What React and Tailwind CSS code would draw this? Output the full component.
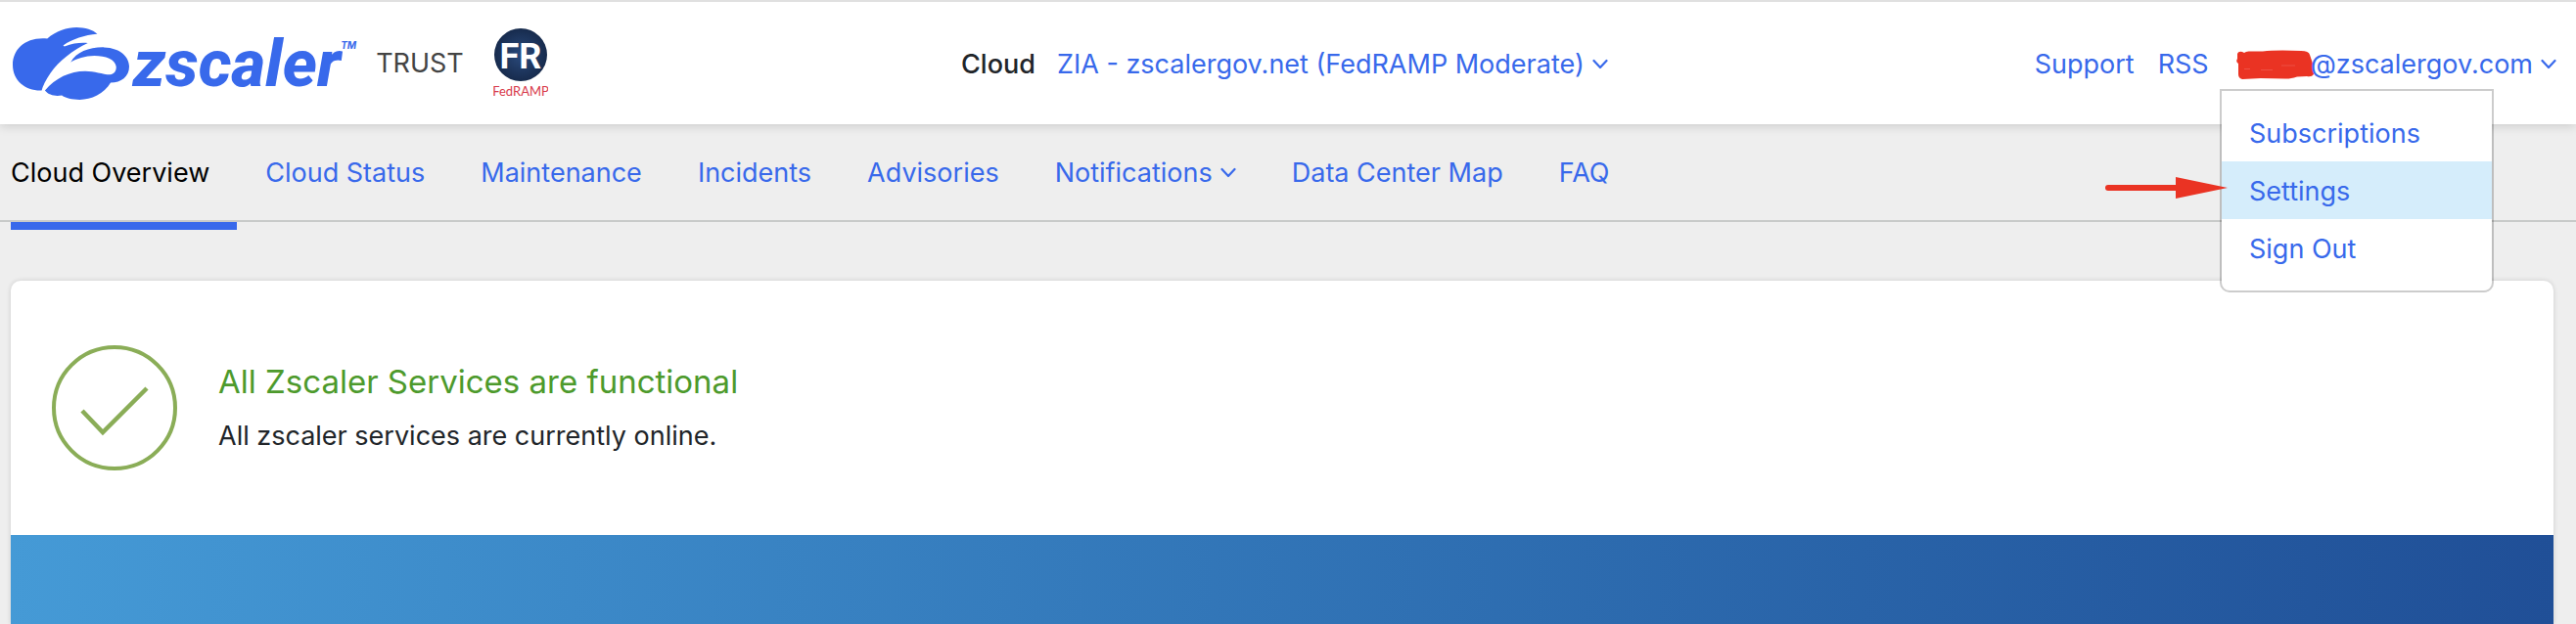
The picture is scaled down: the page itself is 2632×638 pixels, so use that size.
import React from 'react';

const NAV_ITEMS = [
  { label: 'Cloud Overview', active: true },
  { label: 'Cloud Status' },
  { label: 'Maintenance' },
  { label: 'Incidents' },
  { label: 'Advisories' },
  { label: 'Notifications', menu: true },
  { label: 'Data Center Map' },
  { label: 'FAQ' }
];

const ACCOUNT_ITEMS = [
  { label: 'Subscriptions' },
  { label: 'Settings', active: true },
  { label: 'Sign Out' }
];

const Chevron = () => (
  <svg className="w-4 h-3 shrink-0" viewBox="0 0 16 12" fill="none" aria-hidden="true">
    <path d="M1.5 2 8 9 14.5 2" stroke="currentColor" strokeWidth="2.2" strokeLinecap="round" strokeLinejoin="round" />
  </svg>
);

const CloudLogo = () => (
  <svg className="w-[119px] h-[74px] shrink-0" viewBox="39 40 358 222" fill="#3869eb" aria-hidden="true">
    <path d="M128 234C80 236 39 205 39 155C39 105 80 68 145 74C175 50 205 40 235 40C262 41 285 47 299 60C260 63 222 76 194 95L198 98C225 88 250 86 270 88C225 108 180 145 155 180C140 202 131 220 128 234Z" />
    <path d="M217 147C235 115 275 100 320 101C370 103 397 130 397 160C397 192 372 209 340 210C320 245 280 262 245 262C222 262 200 257 190 249C170 252 150 249 138 234C170 195 215 174 262 174C290 174 315 184 338 185C352 183 358 172 357 160C354 138 325 127 290 127C262 128 235 135 217 147Z" />
  </svg>
);

const FedRampBadge = () => (
  <svg className="w-14 h-[72px] shrink-0" viewBox="0 0 56 72" role="img" aria-label="FedRAMP">
    <defs>
      <radialGradient id="badge">
        <stop offset="0" stopColor="#2a4a7c" />
        <stop offset="1" stopColor="#172b4d" />
      </radialGradient>
    </defs>
    <circle cx="28" cy="27" r="27" fill="url(#badge)" />
    <text x="28" y="41" textAnchor="middle" fontFamily="Roboto, sans-serif" fontWeight="700" fontSize="36" fill="#fff">FR</text>
    <text x="28" y="69" textAnchor="middle" fontFamily="Lato, sans-serif" fontSize="13" fill="#d83a4b">FedRAMP</text>
  </svg>
);

const AccountMenu = () => (
  <div className="relative">
    <button type="button" className="flex items-center gap-2">
      <span className="flex items-center">
        <svg className="w-20 h-[30px] -mr-1" viewBox="0 0 80 30" fill="#ea3323" aria-hidden="true">
          <path d="M1 4Q2 1 6 2L8 3Q10 1 14 1.500L27 1.500Q40 0 66 1Q74 1 75 5L78 14L79 25Q77 28 72 27L62 27.500Q54 30 50 29.500L25 29L6 30Q2 29 2 25L2 14Q-1 12 1 9Z" />
          <path d="M8 19.500H14M25 20.500H37M46 16H60" stroke="#f0655a" strokeWidth="0.600" />
        </svg>
        @zscalergov.com
      </span>
      <Chevron />
    </button>

    <ul className="absolute z-10 top-[43px] right-16 w-[280px] pt-[13px] pb-[14px] bg-white bg-clip-padding border-2 border-black/20 rounded-b-[10px]">
      {ACCOUNT_ITEMS.map((item) => (
        <li key={item.label} className={item.active ? 'relative bg-[#d5edfb]' : ''}>
          <a href="#" className="block px-7 pt-0.5 leading-[57px]">{item.label}</a>

          {item.active && (
            <svg className="absolute top-4 -left-[119px] w-[126px] h-[22px]" viewBox="0 0 126 22" fill="#ea3323" aria-hidden="true">
              <path d="M3 11H80" stroke="#ea3323" strokeWidth="6" strokeLinecap="round" />
              <path d="M72 0 125 11 72 22Z" />
            </svg>
          )}
        </li>
      ))}
    </ul>
  </div>
);

const App = () => {
  return (
    <div className="min-h-screen flex flex-col bg-[#eeeeee] text-[27px] leading-[36px] text-[#3869eb] font-[Inter,sans-serif]">

      {/* HEADER */}
      <header className="relative z-10 grid grid-cols-[1fr_auto_1fr] items-center h-[127px] pt-0.5 pl-[13px] pr-5 bg-white border-t-2 border-[#e0e0e0] shadow-[0_2px_10px_rgba(0,0,0,0.15)]">

        <div className="flex items-center pb-0.5">
          <CloudLogo />
          <span className="ml-1 text-[67px] leading-[74px] font-extrabold italic font-[Roboto,sans-serif]">zscaler</span>
          <span className="self-start mt-2.5 text-[10px] font-bold italic leading-4">TM</span>
          <span className="ml-5 text-[#444444]">TRUST</span>
          <span className="ml-[30px]"><FedRampBadge /></span>
        </div>

        <div className="flex items-center gap-[22px]">
          <label htmlFor="cloud" className="font-medium text-[#212529]">Cloud</label>
          <div className="flex items-center gap-2">
            <select id="cloud" className="appearance-none bg-transparent">
              <option>ZIA - zscalergov.net (FedRAMP Moderate)</option>
            </select>
            <Chevron />
          </div>
        </div>

        <div className="flex items-center justify-end">
          <a href="#">Support</a>
          <a href="#" className="ml-6">RSS</a>
          <div className="ml-7"><AccountMenu /></div>
        </div>
      </header>

      {/* NAVIGATION */}
      <nav className="flex h-[100px] px-[11px] gap-[29px] border-b-2 border-[#c8cac9]">
        {NAV_ITEMS.map((item) => (
          <div key={item.label} className={item.active ? 'h-[108px] shrink-0 border-b-8 border-[#3869eb]' : 'shrink-0'}>
            {item.menu ? (
              <button type="button" className="flex items-center gap-2 h-[98px] pt-0.5 pr-7">
                {item.label}
                <Chevron />
              </button>
            ) : (
              <a href="#" className={item.active ? 'flex items-center h-[98px] pt-0.5 pr-7 text-black' : 'flex items-center h-[98px] pt-0.5 pr-7'}>
                {item.label}
              </a>
            )}
          </div>
        ))}
      </nav>

      {/* STATUS */}
      <main className="grow flex flex-col mt-[60px] ml-[11px] mr-[23px] bg-white rounded-t-[10px] shadow-[0_0_5px_rgba(0,0,0,0.15)]">
        <section className="flex items-center gap-[42px] h-[260px] px-[42px]">
          <svg className="w-32 h-32 shrink-0" viewBox="0 0 128 128" fill="none" stroke="#8aad57" strokeWidth="4" aria-hidden="true">
            <circle cx="64" cy="64" r="62" />
            <path d="M31 67 52 89 97 44" strokeWidth="4.500" />
          </svg>

          <div className="pb-0.5">
            <h1 className="text-[33px] leading-[44px] text-[#4d9a2c]">All Zscaler Services are functional</h1>
            <p className="mt-4 text-[#212529]">All zscaler services are currently online.</p>
          </div>
        </section>

        <div className="grow bg-linear-to-r from-[#459ad6] to-[#204f97]" />
      </main>
    </div>
  );
};

export default App;
